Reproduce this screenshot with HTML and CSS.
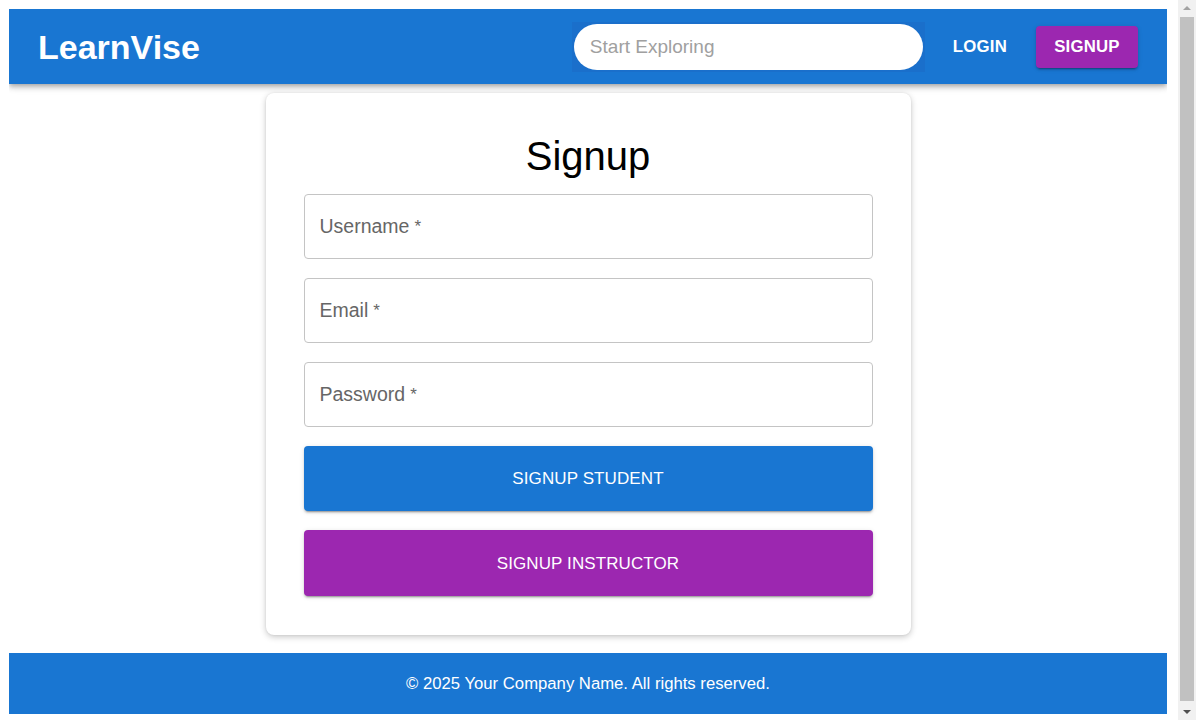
FILE: index.html
```html
<!DOCTYPE html>
<html lang="en">
<head>
<meta charset="utf-8">
<title>LearnVise - Signup</title>
<link rel="stylesheet" href="styles.css">
</head>
<body>
  <header class="appbar">
    <div class="logo">LearnVise</div>
    <div class="nav">
      <div class="search-wrap">
        <input class="search" type="text" placeholder="Start Exploring">
      </div>
      <button class="btn-text">LOGIN</button>
      <button class="btn-nav">SIGNUP</button>
    </div>
  </header>

  <main class="main">
    <section class="card">
      <h1 class="title">Signup</h1>
      <form class="form">
        <div class="field"><span class="label">Username<span class="req">*</span></span></div>
        <div class="field"><span class="label">Email<span class="req">*</span></span></div>
        <div class="field"><span class="label">Password<span class="req">*</span></span></div>
        <button type="button" class="btn btn-blue">SIGNUP STUDENT</button>
        <button type="button" class="btn btn-purple">SIGNUP INSTRUCTOR</button>
      </form>
    </section>
  </main>

  <footer class="footer">© 2025 Your Company Name. All rights reserved.</footer>

  <div class="scrollbar" aria-hidden="true">
    <svg class="arrow" width="18" height="17" viewBox="0 0 18 17"><path d="M5 10h8L9 6z" fill="#a3a3a3"/></svg>
    <div class="thumb"></div>
    <svg class="arrow" width="18" height="17" viewBox="0 0 18 17"><path d="M5 7h8l-4 4z" fill="#505050"/></svg>
  </div>
</body>
</html>
```

FILE: styles.css
```css
body {
  margin: 9px 29px 9px 9px;
  font-family: "Liberation Sans", Arial, sans-serif;
  background: #fff;
  color: #000;
}

.appbar {
  height: 75px;
  background: #1976d2;
  display: flex;
  align-items: center;
  justify-content: space-between;
  padding: 0 29px;
  box-shadow: 0 2px 4px -1px rgba(0,0,0,0.2), 0 4px 5px 0 rgba(0,0,0,0.14), 0 1px 10px 0 rgba(0,0,0,0.12);
}

.logo {
  color: #fff;
  font-weight: 700;
  font-size: 34px;
  line-height: 1;
  margin-top: 1px;
}

.nav {
  display: flex;
  align-items: center;
}

.search-wrap {
  padding: 2px;
  background: #1a6fcb;
  display: flex;
}

.search {
  width: 349px;
  height: 46px;
  box-sizing: border-box;
  border: none;
  border-radius: 23px;
  background: #fff;
  padding: 0 16px;
  font-family: "Liberation Sans", Arial, sans-serif;
  font-size: 19px;
  outline: none;
}
.search::placeholder {
  color: #a0a0a0;
}

.btn-text {
  margin-left: 20px;
  background: none;
  border: none;
  color: #fff;
  font-family: "Liberation Sans", Arial, sans-serif;
  font-weight: 700;
  font-size: 16.8px;
  letter-spacing: 0.2px;
  padding: 6px 8px;
}

.btn-nav {
  margin-left: 21px;
  height: 42px;
  width: 102px;
  background: #9c27b0;
  border: none;
  border-radius: 4px;
  color: #fff;
  font-family: "Liberation Sans", Arial, sans-serif;
  font-weight: 700;
  font-size: 16.8px;
  letter-spacing: 0.2px;
  padding: 0;
  box-shadow: 0 3px 1px -2px rgba(0,0,0,0.2), 0 2px 2px 0 rgba(0,0,0,0.14), 0 1px 5px 0 rgba(0,0,0,0.12);
}

.main {
  display: flex;
  justify-content: center;
  padding-top: 9px;
}

.card {
  width: 645px;
  box-sizing: border-box;
  background: #fff;
  border-radius: 8px;
  padding: 40px 38px 39px;
  box-shadow: 0 2px 6px rgba(0,0,0,0.22), 0 0 2px rgba(0,0,0,0.08);
}

.title {
  margin: 0 0 15px;
  text-align: center;
  font-weight: 400;
  font-size: 40px;
  line-height: 46px;
}

.form {
  display: flex;
  flex-direction: column;
  gap: 19px;
  margin: 0;
}

.field {
  height: 65px;
  box-sizing: border-box;
  border: 1px solid #c4c4c4;
  border-radius: 4px;
  display: flex;
  align-items: center;
  padding-left: 15px;
}

.label {
  font-size: 19.5px;
  color: #666;
}

.req {
  margin-left: 5px;
  font-size: 17px;
  vertical-align: 1px;
}

.btn {
  height: 65px;
  border: none;
  border-radius: 4px;
  color: #fff;
  font-family: "Liberation Sans", Arial, sans-serif;
  font-size: 17px;
  letter-spacing: 0.1px;
  padding-top: 2px;
  box-shadow: 0 3px 1px -2px rgba(0,0,0,0.2), 0 2px 2px 0 rgba(0,0,0,0.14), 0 1px 5px 0 rgba(0,0,0,0.12);
}

.btn-blue {
  background: #1976d2;
}

.btn-purple {
  background: #9c27b0;
  height: 66px;
}

.footer {
  margin-top: 18px;
  height: 61px;
  background: #1976d2;
  color: #fff;
  font-size: 16.7px;
  display: flex;
  align-items: center;
  justify-content: center;
}

.scrollbar {
  position: fixed;
  top: 0;
  right: 0;
  width: 18px;
  height: 100vh;
  background: #f1f1f1;
  display: flex;
  flex-direction: column;
  align-items: center;
}

.arrow {
  flex: none;
}

.thumb {
  flex: 1;
  width: 14px;
  margin: 0 0 2px;
  background: #c1c1c1;
}
```
